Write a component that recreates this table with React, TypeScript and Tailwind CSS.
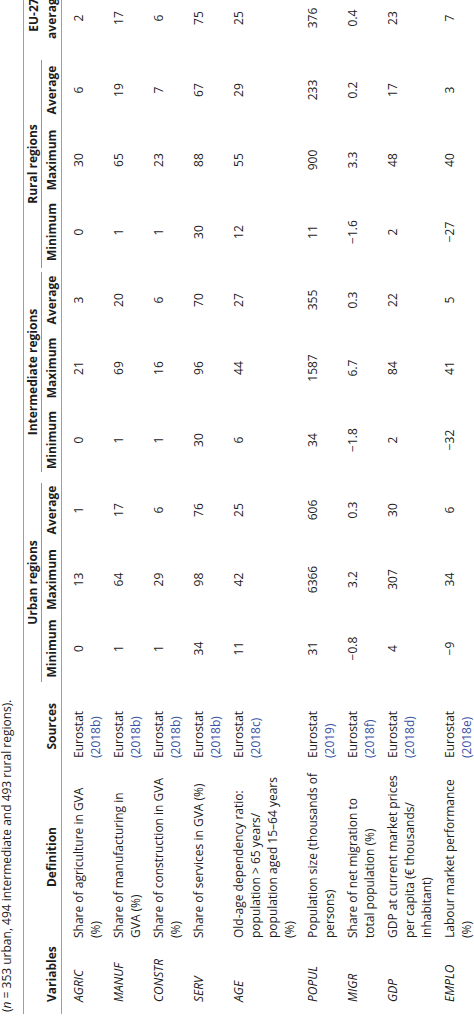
const rows = [
  { v: 'AGRIC', def: ['Share of agriculture in GVA', '(%)'], src: '(2018b)', u: ['0', '13', '1'], m: ['0', '21', '3'], r: ['0', '30', '6'], eu: '2' },
  { v: 'MANUF', def: ['Share of manufacturing in', 'GVA (%)'], src: '(2018b)', u: ['1', '64', '17'], m: ['1', '69', '20'], r: ['1', '65', '19'], eu: '17' },
  { v: 'CONSTR', def: ['Share of construction in GVA', '(%)'], src: '(2018b)', u: ['1', '29', '6'], m: ['1', '16', '6'], r: ['1', '23', '7'], eu: '6' },
  { v: 'SERV', def: ['Share of services in GVA (%)'], src: '(2018b)', u: ['34', '98', '76'], m: ['30', '96', '70'], r: ['30', '88', '67'], eu: '75' },
  { v: 'AGE', def: ['Old-age dependency ratio:', 'population > 65 years/', 'population aged 15–64 years', '(%)'], src: '(2018c)', u: ['11', '42', '25'], m: ['6', '44', '27'], r: ['12', '55', '29'], eu: '25' },
  { v: 'POPUL', def: ['Population size (thousands of', 'persons)'], src: '(2019)', u: ['31', '6366', '606'], m: ['34', '1587', '355'], r: ['11', '900', '233'], eu: '376' },
  { v: 'MIGR', def: ['Share of net migration to', 'total population (%)'], src: '(2018f)', u: ['−0.8', '3.2', '0.3'], m: ['−1.8', '6.7', '0.3'], r: ['−1.6', '3.3', '0.2'], eu: '0.4' },
  { v: 'GDP', def: ['GDP at current market prices', 'per capita (€ thousands/', 'inhabitant)'], src: '(2018d)', u: ['4', '307', '30'], m: ['2', '84', '22'], r: ['2', '48', '17'], eu: '23' },
  { v: 'EMPLO', def: ['Labour market performance', '(%)'], src: '(2018e)', u: ['−9', '34', '6'], m: ['−32', '41', '5'], r: ['−27', '40', '3'], eu: '7' },
];

const cols = 'grid grid-cols-[70px_182px_80px_67px_71px_68px_72px_72px_64px_72px_72px_68px_76px]';

export default function App() {
  return (
    <div className="w-[474px] h-[1019px] overflow-hidden bg-white">
      {/* table is typeset landscape and turned a quarter left */}
      <div
        className="w-[1040px] h-[474px] origin-top-left -rotate-90 translate-y-[1019px] text-[12px] leading-[17px] text-[#1c1c1c]"
        style={{ fontFamily: "'Open Sans', 'Liberation Sans', sans-serif" }}
      >
        <p className="-mt-[5px] h-[23px] leading-[14px] pl-[2px] whitespace-nowrap">
          (<i>n</i> = 353 urban, 494 intermediate and 493 rural regions).
        </p>

        {/* Header */}
        <div className="border-t border-b border-[#87a1d3] font-bold">
          <div className={`${cols} h-[17px] items-center`}>
            <div className="col-span-3" />
            <div className="col-span-3 mr-[7px] h-full border-b border-[#8e97aa] text-center">Urban regions</div>
            <div className="col-span-3 mx-[4px] h-full border-b border-[#8e97aa] text-center">Intermediate regions</div>
            <div className="col-span-3 mr-[4px] h-full border-b border-[#8e97aa] text-center">Rural regions</div>
            <div className="pl-[6px] text-center">EU-27</div>
          </div>
          <div className={`${cols} h-[20px] pt-[2px]`}>
            <div className="pl-[12px]">Variables</div>
            <div className="text-center pr-[8px]">Definition</div>
            <div className="text-right pr-[21px]">Sources</div>
            {['Urban', 'Intermediate', 'Rural'].map((g) => (
              <div key={g} className="contents">
                <div className="text-center">Minimum</div>
                <div className="text-center">Maximum</div>
                <div className="text-center">Average</div>
              </div>
            ))}
            <div className="pl-[6px] text-center">average</div>
          </div>
        </div>

        {/* Body */}
        <div className="pt-[2px]">
          {rows.map((row) => (
            <div key={row.v} className={`${cols} pt-[6px]`}>
              <div className="pl-[12px] italic">{row.v}</div>
              <div className="pl-[6px] whitespace-nowrap">
                {row.def.map((line) => (
                  <div key={line}>{line}</div>
                ))}
              </div>
              <div className="pl-[4px] whitespace-nowrap">
                <div>Eurostat</div>
                <div className="text-[#3a52a6]">{row.src}</div>
              </div>
              {[...row.u, ...row.m, ...row.r].map((n, k) => (
                <div key={k} className="text-center">
                  {n}
                </div>
              ))}
              <div className="text-center">{row.eu}</div>
            </div>
          ))}
        </div>
      </div>
    </div>
  );
}
